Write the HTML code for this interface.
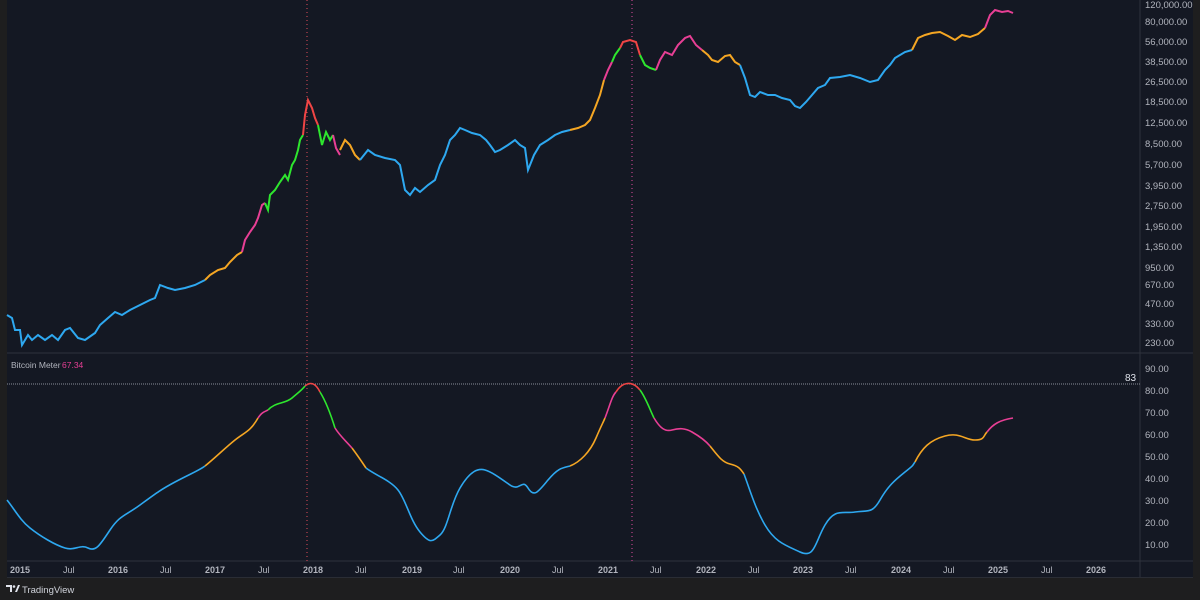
<!DOCTYPE html>
<html><head><meta charset="utf-8"><style>
html,body{margin:0;padding:0;width:1200px;height:600px;background:#1e1e1f;overflow:hidden;font-family:"Liberation Sans",sans-serif}
</style></head><body>
<svg width="1200" height="600" viewBox="0 0 1200 600" xmlns="http://www.w3.org/2000/svg" font-family="Liberation Sans, sans-serif">
<rect x="0" y="0" width="1200" height="600" fill="#1e1e1f"/>
<rect x="7" y="0" width="1186" height="578" fill="#141823"/>
<line x1="1140" y1="0" x2="1140" y2="578" stroke="#2e323c" stroke-width="1"/>
<line x1="7" y1="353" x2="1193" y2="353" stroke="#2e323c" stroke-width="1"/>
<line x1="7" y1="561" x2="1193" y2="561" stroke="#2e323c" stroke-width="1"/>
<line x1="7" y1="577.5" x2="1193" y2="577.5" stroke="#2a2d35"/>
<line x1="7" y1="384" x2="1140" y2="384" stroke="#8a8e98" stroke-width="1" stroke-dasharray="1,1"/>
<line x1="307" y1="0" x2="307" y2="561" stroke="#e04b5a" stroke-dasharray="1,3"/>
<line x1="632" y1="0" x2="632" y2="561" stroke="#e04ba0" stroke-dasharray="1,3"/>
<g fill="none" stroke-width="2" stroke-linejoin="miter">
<polyline stroke="#2ea8f0" points="7,315 12,318 15,330 20,330 22,345 28,335 32,340 38,335 45,340 52,335 58,340 65,330 70,328 78,338 85,340 95,333 100,325 108,318 115,312 122,315 130,310 140,305 150,300 155,298 160,285 168,288 175,290 185,288 195,285 205,280"/>
<polyline stroke="#f5a623" points="205,280 210,275 218,270 225,268 230,262 237,255 242,252"/>
<polyline stroke="#e83f95" points="242,252 245,240 250,232 255,225 258,218 262,205 265,203"/>
<polyline stroke="#2ee62e" points="265,203 268,210 270,195 275,190 280,182 285,175 288,180 292,165 295,160 298,150 300,140 303,135"/>
<polyline stroke="#f04545" points="303,135 305,115 308,100 312,108 315,118 318,125"/>
<polyline stroke="#2ee62e" points="318,125 322,145 326,132 330,140 333,135"/>
<polyline stroke="#e83f95" points="333,135 336,148 340,155"/>
<polyline stroke="#f5a623" points="340,150 345,140 350,145 355,155 360,160"/>
<polyline stroke="#2ea8f0" points="360,160 368,150 375,155 385,158 395,160 400,165 405,190 410,195 415,188 420,192 428,185 435,180 440,165 445,155 450,140 455,135 460,128 465,130 472,133 480,135 486,140 490,145 495,152 500,150 508,145 515,140 520,145 525,148 528,170 534,155 540,145 548,140 555,135 562,132 570,130"/>
<polyline stroke="#f5a623" points="570,130 578,128 585,125 590,120 595,108 600,95 604,80"/>
<polyline stroke="#e83f95" points="604,80 608,70 612,62"/>
<polyline stroke="#2ee62e" points="612,62 615,55 620,48"/>
<polyline stroke="#f04545" points="620,48 623,42 630,40 636,42 640,55"/>
<polyline stroke="#2ee62e" points="640,55 645,65 650,68 656,70"/>
<polyline stroke="#e83f95" points="656,70 660,60 665,52 672,55 678,45 685,38 690,36 696,45 702,50"/>
<polyline stroke="#f5a623" points="702,50 708,55 712,60 718,62 725,56 730,55 735,62 740,65"/>
<polyline stroke="#2ea8f0" points="740,65 745,78 750,95 755,97 760,92 768,95 775,95 782,98 790,100 795,106 800,108 806,102 812,95 818,88 825,85 830,78 840,77 850,75 860,78 870,82 878,80 885,70 890,65 895,58 905,52 912,50"/>
<polyline stroke="#f5a623" points="912,50 918,38 925,35 932,33 940,32 948,36 955,40 962,35 970,37 978,34 985,28"/>
<polyline stroke="#e83f95" points="985,28 990,15 995,10 1002,12 1008,11 1013,13"/>
</g>
<g fill="none" stroke-width="1.6">
<path stroke="#2ea8f0" d="M7,500 C15,510 20,520 30,528 S55,545 65,548 S80,544 88,548 S100,545 110,530 S125,516 140,505 S160,490 175,482 S200,470 205,466"/>
<path stroke="#f5a623" d="M205,466 C215,458 225,448 235,440 S250,432 258,418"/>
<path stroke="#e83f95" d="M258,418 C262,412 264,412 268,410"/>
<path stroke="#2ee62e" d="M268,410 C275,402 285,404 292,398 S302,390 305,386"/>
<path stroke="#f04545" d="M305,386 C310,382 315,382 320,392"/>
<path stroke="#2ee62e" d="M320,392 C325,400 330,412 335,428"/>
<path stroke="#e83f95" d="M335,428 C340,436 345,440 352,448"/>
<path stroke="#f5a623" d="M352,448 C358,456 362,462 366,468"/>
<path stroke="#2ea8f0" d="M366,468 C375,475 390,480 398,490 S410,520 420,532 S432,542 440,535 S450,505 460,488 S478,468 485,470 S500,478 510,485 S522,478 528,488 S538,492 548,480 S562,468 570,466"/>
<path stroke="#f5a623" d="M570,466 C580,462 590,452 596,438 S602,425 605,418"/>
<path stroke="#e83f95" d="M605,418 C610,405 612,396 616,392"/>
<path stroke="#f04545" d="M616,392 C622,382 632,380 640,390"/>
<path stroke="#2ee62e" d="M640,390 C646,398 650,410 654,418"/>
<path stroke="#e83f95" d="M654,418 C660,428 665,432 672,430 S685,428 692,432 S705,440 710,446"/>
<path stroke="#f5a623" d="M710,446 C718,456 722,462 730,464 S740,468 744,474"/>
<path stroke="#2ea8f0" d="M744,474 C750,490 755,508 765,525 S785,545 800,552 S815,542 825,525 S842,514 855,512 S872,514 880,500 S895,480 905,472 S912,466 915,462"/>
<path stroke="#f5a623" d="M915,462 C922,448 930,440 945,436 S965,440 975,440 S983,436 987,432"/>
<path stroke="#e83f95" d="M987,432 C993,424 1000,420 1013,418"/>
</g>
<g fill="#b2b5be" font-size="9.5">
<text x="1145" y="8">120,000.00</text>
<text x="1145" y="25">80,000.00</text>
<text x="1145" y="45">56,000.00</text>
<text x="1145" y="65">38,500.00</text>
<text x="1145" y="85">26,500.00</text>
<text x="1145" y="105">18,500.00</text>
<text x="1145" y="126">12,500.00</text>
<text x="1145" y="147">8,500.00</text>
<text x="1145" y="168">5,700.00</text>
<text x="1145" y="189">3,950.00</text>
<text x="1145" y="209">2,750.00</text>
<text x="1145" y="230">1,950.00</text>
<text x="1145" y="250">1,350.00</text>
<text x="1145" y="271">950.00</text>
<text x="1145" y="288">670.00</text>
<text x="1145" y="307">470.00</text>
<text x="1145" y="327">330.00</text>
<text x="1145" y="346">230.00</text>
<text x="1145" y="372">90.00</text>
<text x="1145" y="394">80.00</text>
<text x="1145" y="416">70.00</text>
<text x="1145" y="438">60.00</text>
<text x="1145" y="460">50.00</text>
<text x="1145" y="482">40.00</text>
<text x="1145" y="504">30.00</text>
<text x="1145" y="526">20.00</text>
<text x="1145" y="548">10.00</text>
</g>
<text x="1125" y="381" fill="#e0e3eb" font-size="10">83</text>
<text x="11" y="368" fill="#b2b5be" font-size="8.5">Bitcoin Meter</text>
<text x="62" y="368" fill="#e83f95" font-size="8.5">67.34</text>
<g fill="#b2b5be" font-size="9">
<text x="10" y="573" font-weight="bold">2015</text>
<text x="63" y="573">Jul</text>
<text x="108" y="573" font-weight="bold">2016</text>
<text x="160" y="573">Jul</text>
<text x="205" y="573" font-weight="bold">2017</text>
<text x="258" y="573">Jul</text>
<text x="303" y="573" font-weight="bold">2018</text>
<text x="355" y="573">Jul</text>
<text x="402" y="573" font-weight="bold">2019</text>
<text x="453" y="573">Jul</text>
<text x="500" y="573" font-weight="bold">2020</text>
<text x="552" y="573">Jul</text>
<text x="598" y="573" font-weight="bold">2021</text>
<text x="650" y="573">Jul</text>
<text x="696" y="573" font-weight="bold">2022</text>
<text x="748" y="573">Jul</text>
<text x="793" y="573" font-weight="bold">2023</text>
<text x="845" y="573">Jul</text>
<text x="891" y="573" font-weight="bold">2024</text>
<text x="943" y="573">Jul</text>
<text x="988" y="573" font-weight="bold">2025</text>
<text x="1041" y="573">Jul</text>
<text x="1086" y="573" font-weight="bold">2026</text>
</g>
<g fill="#e0e3eb">
<path d="M6,585 h6 v7 h-2 v-5 h-4z"/>
<circle cx="14" cy="586.5" r="1.3"/>
<path d="M15,592 l3,-7 h2 l-3,7z"/>
</g>
<text x="22" y="593" fill="#d1d4dc" font-size="9.5">TradingView</text>
</svg>
</body></html>
